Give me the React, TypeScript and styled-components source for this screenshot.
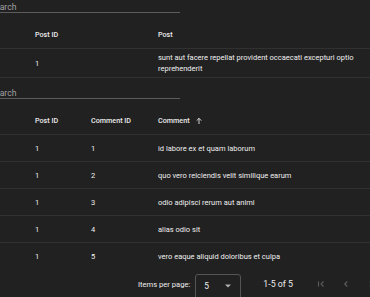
import React from 'react';
import styled, { createGlobalStyle } from 'styled-components';

const GlobalStyle = createGlobalStyle`
  html, body {
    margin: 0;
    padding: 0;
    background: #212121;
    overflow: hidden;
  }
  body {
    font-family: Roboto, "Liberation Sans", Arial, sans-serif;
    color: #eeeeee;
  }
`;

const Page = styled.div`
  width: 450px;
  margin-top: -8px;
  margin-left: -40px;
`;

const Field = styled.div`
  width: 220px;
  padding-top: 10px;
  margin-bottom: 8px;
  border-bottom: 1px solid #5c5c5c;
`;

const FieldLabel = styled.div`
  padding-left: 30px;
  font-size: 8.6px;
  line-height: 10px;
  color: #a0a0a0;
`;

const Table = styled.div<{ $cols: string }>`
  display: grid;
  grid-template-columns: ${(p) => p.$cols};
`;

const HeadCell = styled.div`
  box-sizing: border-box;
  height: 28px;
  display: flex;
  align-items: center;
  gap: 5px;
  font-size: 7.2px;
  font-weight: 500;
  color: #ececec;
  border-bottom: 1px solid #313131;
  &:first-child {
    justify-content: flex-end;
    padding-right: 38px;
  }
`;

const Cell = styled.div<{ $wrap?: number; $last?: boolean }>`
  box-sizing: border-box;
  min-height: 27px;
  padding-top: 3px;
  padding-bottom: 3px;
  display: flex;
  align-items: center;
  font-size: 7.5px;
  line-height: 11px;
  color: #f0f0f0;
  border-bottom: 1px solid ${(p) => (p.$last ? 'transparent' : '#313131')};
  padding-right: ${(p) => (p.$wrap ? `${p.$wrap}px` : '0')};
  &:first-child {
    padding-left: 13px;
  }
`;

const Paginator = styled.div`
  height: 28px;
  display: flex;
  align-items: center;
  justify-content: flex-end;
  padding-right: 2px;
  font-size: 7.6px;
  color: #eeeeee;
`;

const PageLabel = styled.span`
  margin-right: 5px;
`;

const Select = styled.div`
  box-sizing: border-box;
  width: 46px;
  height: 31px;
  margin-top: 4px;
  align-self: flex-start;
  border: 1px solid #555;
  border-radius: 3px;
  display: flex;
  align-items: flex-start;
  justify-content: space-between;
  padding: 6px 9px 0 8px;
  font-size: 8.4px;
`;

const Range = styled.span`
  margin: 0 15px 0 22px;
  font-size: 8.8px;
`;

const IconButton = styled.div`
  width: 25px;
  height: 25px;
  display: flex;
  align-items: center;
  justify-content: center;
  color: #5e5e5e;
`;

const SortArrow = () => (
  <svg width="8" height="8" viewBox="0 0 24 24" fill="none" stroke="#ececec" strokeWidth="2.6">
    <path d="M12 21V4M5 11l7-7 7 7" />
  </svg>
);

const Caret = () => (
  <svg width="6" height="4" viewBox="0 0 10 5" style={{ marginTop: 3 }}>
    <path d="M0 0l5 5 5-5z" fill="#b0b0b0" />
  </svg>
);

const FirstIcon = () => (
  <svg width="10" height="10" viewBox="0 0 24 24" fill="none" stroke="currentColor" strokeWidth="2.6">
    <path d="M6 6v12M18 6l-6 6 6 6" />
  </svg>
);
const PrevIcon = () => (
  <svg width="10" height="10" viewBox="0 0 24 24" fill="none" stroke="currentColor" strokeWidth="2.6">
    <path d="M15 6l-6 6 6 6" />
  </svg>
);
const NextIcon = () => (
  <svg width="10" height="10" viewBox="0 0 24 24" fill="none" stroke="currentColor" strokeWidth="2.6">
    <path d="M9 6l6 6-6 6" />
  </svg>
);
const LastIcon = () => (
  <svg width="10" height="10" viewBox="0 0 24 24" fill="none" stroke="currentColor" strokeWidth="2.6">
    <path d="M6 6l6 6-6 6M18 6v12" />
  </svg>
);

const comments = [
  'id labore ex et quam laborum',
  'quo vero reiciendis velit similique earum',
  'odio adipisci rerum aut animi',
  'alias odio sit',
  'vero eaque aliquid doloribus et culpa',
];

export default function App() {
  return (
    <>
      <GlobalStyle />
      <Page>
        <Field>
          <FieldLabel>Search</FieldLabel>
        </Field>
        <Table $cols="75px 123px 1fr">
          <HeadCell>Id –</HeadCell>
          <HeadCell>Post ID</HeadCell>
          <HeadCell>Post</HeadCell>
          <Cell />
          <Cell>1</Cell>
          <Cell $wrap={48}>sunt aut facere repellat provident occaecati excepturi optio reprehenderit</Cell>
        </Table>

        <Field>
          <FieldLabel>Search</FieldLabel>
        </Field>
        <Table $cols="75px 56px 67px 1fr">
          <HeadCell />
          <HeadCell>Post ID</HeadCell>
          <HeadCell>Comment ID</HeadCell>
          <HeadCell>
            Comment <SortArrow />
          </HeadCell>
          {comments.map((c, i) => {
            const last = i === comments.length - 1;
            return (
              <React.Fragment key={i}>
                <Cell $last={last} />
                <Cell $last={last}>1</Cell>
                <Cell $last={last}>{i + 1}</Cell>
                <Cell $last={last}>{c}</Cell>
              </React.Fragment>
            );
          })}
        </Table>

        <Paginator>
          <PageLabel>Items per page:</PageLabel>
          <Select>
            <span>5</span>
            <Caret />
          </Select>
          <Range>1-5 of 5</Range>
          <IconButton><FirstIcon /></IconButton>
          <IconButton><PrevIcon /></IconButton>
          <IconButton><NextIcon /></IconButton>
          <IconButton><LastIcon /></IconButton>
        </Paginator>
      </Page>
    </>
  );
}
